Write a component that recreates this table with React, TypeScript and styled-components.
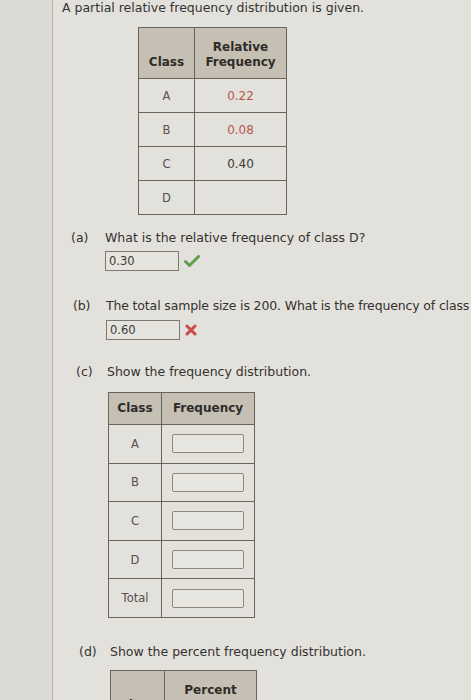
import React from "react";
import styled, { createGlobalStyle } from "styled-components";

const Global = createGlobalStyle`
  html, body { margin: 0; padding: 0; }
  body {
    background: #e3e1db;
    font-family: "DejaVu Sans", Verdana, sans-serif;
    color: #3a3835;
    overflow: hidden;
  }
`;

const Page = styled.div`
  display: flex;
  width: 471px;
  height: 700px;
  overflow: hidden;
`;

const Sidebar = styled.div`
  width: 52px;
  flex: none;
  background: #dcdad4;
  border-right: 1px solid #b9b5ad;
`;

const Main = styled.div`
  flex: 1;
  display: flex;
  flex-direction: column;
  padding-left: 9px;
  white-space: nowrap;
  min-width: 0;
`;

const Title = styled.div`
  font-size: 12.5px;
  line-height: 16px;
  margin-top: 0;
  color: #333;
`;

const Table = styled.table<{ $left: number; $top: number; $cols: [number, number] }>`
  border-collapse: collapse;
  margin-left: ${(p) => p.$left}px;
  margin-top: ${(p) => p.$top}px;
  table-layout: fixed;
  width: ${(p) => p.$cols[0] + p.$cols[1]}px;
  font-size: 11px;
  border: 1px solid #6a655c;
  & col:first-child { width: ${(p) => p.$cols[0]}px; }
  & col:last-child { width: ${(p) => p.$cols[1]}px; }
`;

const Th = styled.th<{ $h: number }>`
  background: #c6c0b4;
  border: 1px solid #6a655c;
  height: ${(p) => p.$h}px;
  padding: 0;
  font-weight: bold;
  font-size: 12px;
  color: #2e2c29;
  line-height: 15px;
  vertical-align: bottom;
  padding-bottom: 8px;
  box-sizing: border-box;
`;

const Td = styled.td<{ $h: number; $tone?: "red" | "dark" | "gray" }>`
  border: 1px solid #6a655c;
  height: ${(p) => p.$h}px;
  padding: 0;
  text-align: center;
  box-sizing: border-box;
  font-size: ${(p) => (p.$tone === "gray" ? 11.5 : 12)}px;
  color: ${(p) => (p.$tone === "red" ? "#b5584e" : p.$tone === "gray" ? "#55524d" : "#3b3935")};
`;

const CellInput = styled.div`
  width: 72px;
  height: 19px;
  margin: 0 auto;
  border: 1px solid #8c877e;
  border-radius: 2px;
  box-sizing: border-box;
  background: #e8e6e0;
`;

const Question = styled.div<{ $left: number; $top: number; $tight?: boolean }>`
  display: flex;
  align-items: center;
  margin-left: ${(p) => p.$left}px;
  margin-top: ${(p) => p.$top}px;
  font-size: 12.5px;
  line-height: 16px;
  letter-spacing: ${(p) => (p.$tight ? "-0.15px" : "normal")};
  color: #34322f;
`;

const Label = styled.span<{ $w: number }>`
  width: ${(p) => p.$w}px;
  flex: none;
`;

const AnswerRow = styled.div<{ $left: number; $top: number }>`
  display: flex;
  align-items: center;
  gap: 5px;
  margin-left: ${(p) => p.$left}px;
  margin-top: ${(p) => p.$top}px;
`;

const AnswerBox = styled.div`
  width: 74px;
  height: 20px;
  border: 1px solid #7d786f;
  box-sizing: border-box;
  font-size: 11.5px;
  line-height: 18px;
  padding-left: 3px;
  color: #3b3935;
  background: #e6e4de;
`;

const Check = () => (
  <svg width="16" height="12" viewBox="0 0 16 12">
    <path d="M1.5 6.5 L5.5 10.5 L14.5 1.5" fill="none" stroke="#5f9e4c" strokeWidth="3" strokeLinecap="round" strokeLinejoin="round" />
  </svg>
);

const Cross = () => (
  <svg width="12" height="12" viewBox="0 0 12 12">
    <path d="M2 2 L10 10 M10 2 L2 10" fill="none" stroke="#cc4a4a" strokeWidth="3" strokeLinecap="round" />
  </svg>
);

export default function App() {
  const rel = [
    ["A", "0.22", "red"],
    ["B", "0.08", "red"],
    ["C", "0.40", "dark"],
    ["D", "", "dark"],
  ] as const;
  return (
    <Page>
      <Global />
      <Sidebar />
      <Main>
        <Title>A partial relative frequency distribution is given.</Title>
        <Table $left={76} $top={11} $cols={[56, 92]}>
          <colgroup><col /><col /></colgroup>
          <thead>
            <tr>
              <Th $h={51}>Class</Th>
              <Th $h={51}>Relative<br />Frequency</Th>
            </tr>
          </thead>
          <tbody>
            {rel.map(([c, v, t]) => (
              <tr key={c}>
                <Td $h={34} $tone="gray">{c}</Td>
                <Td $h={34} $tone={t}>{v}</Td>
              </tr>
            ))}
          </tbody>
        </Table>

        <Question $left={9} $top={15}>
          <Label $w={34}>(a)</Label>What is the relative frequency of class D?
        </Question>
        <AnswerRow $left={43} $top={5}>
          <AnswerBox>0.30</AnswerBox>
          <Check />
        </AnswerRow>

        <Question $left={11} $top={27} $tight>
          <Label $w={33}>(b)</Label>The total sample size is 200. What is the frequency of class D?
        </Question>
        <AnswerRow $left={44} $top={6}>
          <AnswerBox>0.60</AnswerBox>
          <Cross />
        </AnswerRow>

        <Question $left={14} $top={24}>
          <Label $w={31}>(c)</Label>Show the frequency distribution.
        </Question>

        <Table $left={46} $top={12} $cols={[53, 93]}>
          <colgroup><col /><col /></colgroup>
          <thead>
            <tr>
              <Th $h={32}>Class</Th>
              <Th $h={32}>Frequency</Th>
            </tr>
          </thead>
          <tbody>
            {["A", "B", "C", "D", "Total"].map((c) => (
              <tr key={c}>
                <Td $h={38.6} $tone="gray">{c}</Td>
                <Td $h={38.6}><CellInput /></Td>
              </tr>
            ))}
          </tbody>
        </Table>

        <Question $left={17} $top={26}>
          <Label $w={31}>(d)</Label>Show the percent frequency distribution.
        </Question>

        <Table $left={48} $top={10} $cols={[54, 92]}>
          <colgroup><col /><col /></colgroup>
          <thead>
            <tr>
              <Th $h={51}>Class</Th>
              <Th $h={51}>Percent<br />Frequency</Th>
            </tr>
          </thead>
        </Table>
      </Main>
    </Page>
  );
}
